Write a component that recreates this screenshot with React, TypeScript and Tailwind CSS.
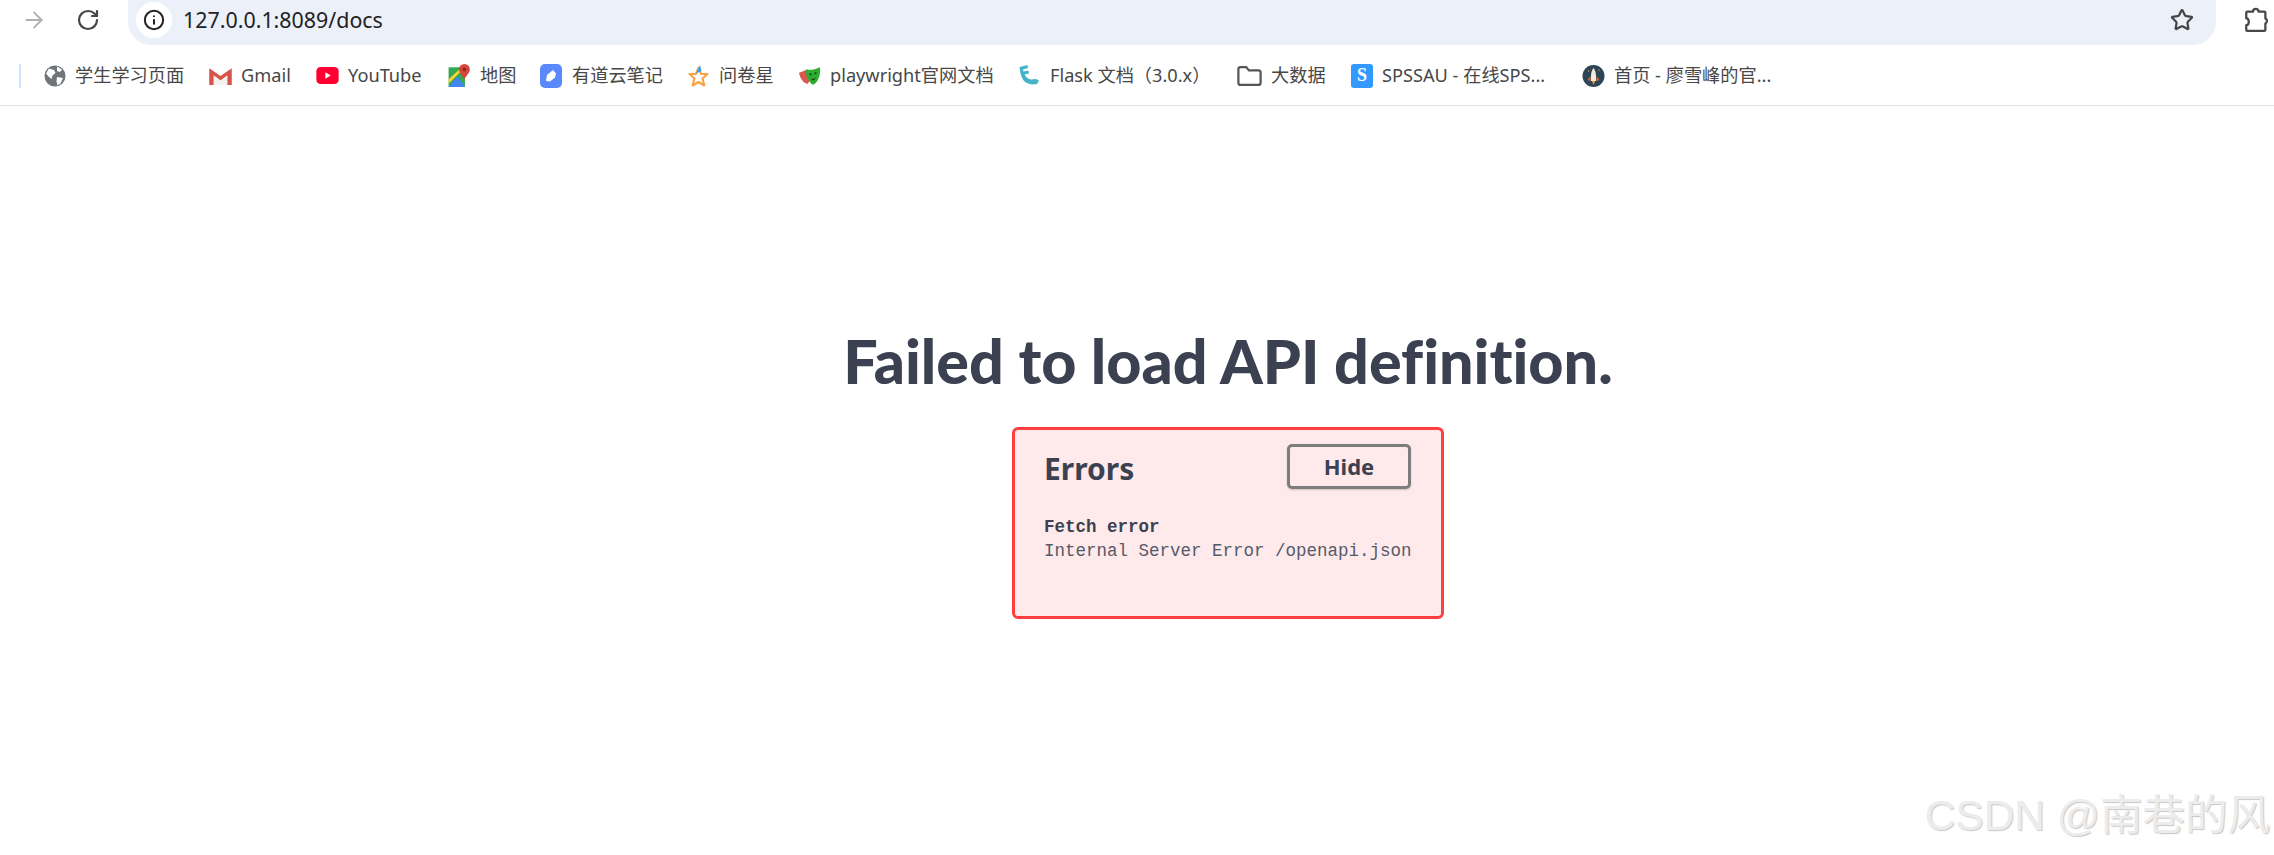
import { ArrowRight, Info, RotateCw, Star } from 'lucide-react';
import type { ReactNode } from 'react';

const BOOKMARKS: { label: string; width: string; gap: string; icon: ReactNode }[] = [
  {
    label: '学生学习页面',
    width: 'w-[109px]',
    gap: 'ml-[23px]',
    icon: (
      <svg viewBox="0 0 22 22" className="h-[22px] w-[22px]">
        <circle cx="11" cy="11" r="10.5" fill="#70757a" />
        <path d="M5 3.5l5 1.5 1.5 3-3 2.5-1 3.5-3-2.5-2.5-3zM13 1.5l5 3-2 2.5-3-1zM13 12l6 1-2.5 5.5-3 2-1-4z" fill="#fff" />
      </svg>
    ),
  },
  {
    label: 'Gmail',
    width: 'w-[50px]',
    gap: 'ml-[25px]',
    icon: (
      <svg viewBox="0 0 20 16" className="h-[18px] w-[23px]">
        <path d="M0 1l10 7 10-7v15h-4V7.5L10 12 4 7.5V16H0z" fill="#d9534a" />
        <path d="M4 7.5V16h12V7.5L10 12z" fill="#f4f2f0" />
      </svg>
    ),
  },
  {
    label: 'YouTube',
    width: 'w-[74px]',
    gap: 'ml-[25px]',
    icon: (
      <svg viewBox="0 0 21 16" className="h-[17px] w-[23px]">
        <rect width="21" height="16" rx="4" fill="#ff0033" />
        <path d="M8.5 5l5 3-5 3z" fill="#fff" />
      </svg>
    ),
  },
  {
    label: '地图',
    width: 'w-[36px]',
    gap: 'ml-[26px]',
    icon: (
      <svg viewBox="0 0 20 22" className="h-[24px] w-[23px]">
        <path d="M0 3h15v18H0z" fill="#34a853" />
        <path d="M0 21l8-10 7 10z" fill="#4285f4" />
        <path d="M0 14L12 3h3L0 18z" fill="#fbd334" />
        <path d="M14.500 0a5 5 0 015 5c0 3-3 5-5 9-2-4-5-6-5-9a5 5 0 015-5z" fill="#d8453b" />
        <circle cx="14.500" cy="5" r="1.700" fill="#8e2a22" />
      </svg>
    ),
  },
  {
    label: '有道云笔记',
    width: 'w-[92px]',
    gap: 'ml-[23px]',
    icon: (
      <svg viewBox="0 0 22 24" className="h-[24px] w-[24px]">
        <rect width="22" height="24" rx="5" fill="#5b89fb" />
        <path d="M6 17l1-6 6-5 3 3.500-1 4-5 4z" fill="#fff" />
      </svg>
    ),
  },
  {
    label: '问卷星',
    width: 'w-[54px]',
    gap: 'ml-[23px]',
    icon: (
      <svg viewBox="0 0 22 24" className="h-[24px] w-[23px]">
        <path d="M11 4l2.600 6h6.400l-5 4.500 1.800 7L11 18l-5.800 3.500 1.800-7-5-4.500h6.400z" fill="#fff" stroke="#f6a446" strokeWidth="2.200" strokeLinejoin="round" />
        <path d="M8.500 9.500L12.500 1l1.500 6z" fill="#3d9df2" />
      </svg>
    ),
  },
  {
    label: 'playwright官网文档',
    width: 'w-[165px]',
    gap: 'ml-[26px]',
    icon: (
      <svg viewBox="0 0 20 18" className="h-[20px] w-[22px]">
        <path d="M0 6l8-3 3 8-3 5c-4 0-7-5-8-10z" fill="#d9574c" />
        <path d="M6 3c4 1 9 0 13-2 1 6-1 13-6 16-4-2-7-8-7-14z" fill="#2ead33" />
        <circle cx="10.500" cy="7.500" r="1" fill="#173f18" />
        <circle cx="15" cy="6.500" r="1" fill="#173f18" />
        <path d="M11 11c1 1 3 1 4-1-.2 2-1 3-2 3s-1.700-1-2-2z" fill="#173f18" />
      </svg>
    ),
  },
  {
    label: 'Flask 文档（3.0.x）',
    width: 'w-[149px]',
    gap: 'ml-[23px]',
    icon: (
      <svg viewBox="0 0 22 24" className="h-[24px] w-[23px]">
        <path d="M1 3l8-2 .5 3-5 1.500.5 2 5-1 .5 3-4.500 1c1.500 3 4 4.500 6.500 5l5-.5 3 1.500-2 3.500c-5 1-10 0-13-3C3 14 1.500 9 1 3z" fill="#45b4c8" />
      </svg>
    ),
  },
  {
    label: '大数据',
    width: 'w-[56px]',
    gap: 'ml-[38px]',
    icon: (
      <svg viewBox="0 0 22 18" className="h-[20px] w-[25px]" fill="none">
        <path d="M1 3a2 2 0 012-2h5l2.500 3H19a2 2 0 012 2v9a2 2 0 01-2 2H3a2 2 0 01-2-2z" stroke="#555" strokeWidth="2" />
      </svg>
    ),
  },
  {
    label: 'SPSSAU - 在线SPS...',
    width: 'w-[171px]',
    gap: 'ml-[24px]',
    icon: (
      <div className="flex h-[24px] w-[22px] items-center justify-center rounded-[3px] bg-[#3399ff] font-['Liberation_Serif',serif] text-[18px] font-bold text-white">
        S
      </div>
    ),
  },
  {
    label: '首页 - 廖雪峰的官...',
    width: 'w-[159px]',
    gap: 'ml-[29px]',
    icon: (
      <svg viewBox="0 0 22 24" className="h-[24px] w-[23px]">
        <circle cx="11" cy="12" r="11" fill="#2d4557" />
        <path d="M5 16l3-4v5zM17 16l-3-4v5z" fill="#e8632c" />
        <path d="M11 4c1.700 2 2.500 5 2.500 8v5h-5v-5c0-3 .8-6 2.500-8z" fill="#efece2" />
        <path d="M9.500 17h3L11 21z" fill="#f29c38" />
        <circle cx="6" cy="7" r=".7" fill="#d9a441" />
        <circle cx="16.500" cy="6" r=".7" fill="#d9a441" />
      </svg>
    ),
  },
];

function App() {
  return (
    <div className="relative h-[855px] w-[2274px] overflow-hidden bg-white font-['Noto_Sans','Noto_Sans_CJK_SC',sans-serif]">
      <div className="flex h-[45px] items-start">
        <ArrowRight className="ml-[21px] mt-[7px] h-[26px] w-[26px] text-[#b0b0b0]" strokeWidth={1.800} />
        <RotateCw className="ml-[29px] mt-[8px] h-[24px] w-[24px] text-[#474747]" strokeWidth={2.200} />
        <div className="ml-[28px] flex h-[45px] w-[2088px] items-center rounded-b-[23px] bg-[#ecf0f9] pb-[5px] pl-[8px]">
          <div className="flex h-[36px] w-[36px] items-center justify-center rounded-full bg-white">
            <Info className="h-[22px] w-[22px] text-[#222]" strokeWidth={2.200} />
          </div>
          <span className="ml-[11px] text-[21.4px] text-[#222]">127.0.0.1:8089/docs</span>
          <Star className="ml-auto mr-[22px] h-[24px] w-[24px] text-[#444]" strokeWidth={2.200} />
        </div>
        <svg viewBox="0 0 24 24" className="ml-[28px] mt-[6px] h-[27px] w-[27px]" fill="none">
          <path d="M3 5h5a2.500 2.500 0 015 0h5a1 1 0 011 1v5a2.500 2.500 0 010 4.500V21a1 1 0 01-1 1H3a1 1 0 01-1-1v-4c3 0 3-6 0-6V6a1 1 0 011-1z" stroke="#474747" strokeWidth="2" strokeLinejoin="round" />
        </svg>
      </div>

      <div className="flex h-[61px] items-center border-b border-[#e3e3e3] pl-[19px] pt-[2px]">
        <div className="h-[24px] w-[2px] bg-[#d3e0fb]" />
        {BOOKMARKS.map((item) => (
          <div key={item.label} className={`flex items-center ${item.gap}`}>
            {item.icon}
            <span className={`ml-[9px] whitespace-nowrap text-[18.2px] text-[#474747] ${item.width}`}>{item.label}</span>
          </div>
        ))}
      </div>

      <div className="flex flex-col items-center pl-[182px] text-[#3b4151]">
        <h1 className="mt-[220px] font-['Lato',sans-serif] text-[61px] leading-[70px] font-black whitespace-nowrap [font-variant-ligatures:none]">Failed to load API definition.</h1>
        <div className="mt-[31px] h-[192px] w-[432px] rounded-[6px] border-[3px] border-[#ff3f3f] bg-[#feeaea] pl-[29px] pr-[30px]">
          <div className="flex items-start justify-between pt-[14px]">
            <h2 className="mt-[2px] text-[30px] leading-[46px] font-bold">Errors</h2>
            <button className="h-[45px] w-[124px] rounded-[5px] border-[3px] border-[#7d7d7d] text-[22px] font-bold shadow-[0_1px_2px_rgba(0,0,0,0.2)]">
              Hide
            </button>
          </div>
          <div className="mt-[23px] font-['Liberation_Mono',monospace] text-[17.5px] leading-[24px]">
            <div className="font-bold">Fetch error</div>
            <div className="whitespace-nowrap text-[#555a6a]">Internal Server Error /openapi.json</div>
          </div>
        </div>
      </div>

      <div className="absolute bottom-[14px] right-[4px] font-['Liberation_Sans','Noto_Sans_CJK_SC',sans-serif] text-[42.5px] leading-[50px] whitespace-nowrap text-[#ececec] [text-shadow:1px_1px_1px_#c8c8c8]">
        CSDN @南巷的风
      </div>
    </div>
  );
}

export default App;
